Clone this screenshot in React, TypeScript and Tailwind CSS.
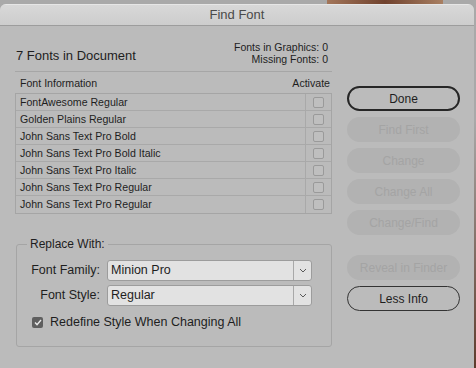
import React from 'react';

const fonts = [
  'FontAwesome Regular',
  'Golden Plains Regular',
  'John Sans Text Pro Bold',
  'John Sans Text Pro Bold Italic',
  'John Sans Text Pro Italic',
  'John Sans Text Pro Regular',
  'John Sans Text Pro Regular',
];

const buttons = ['Find First', 'Change', 'Change All', 'Change/Find'];

function Chevron() {
  return (
    <svg width="8" height="5" viewBox="0 0 8 5" fill="none">
      <path d="M1 1l3 3 3-3" stroke="#5a5a5a" strokeWidth="1" />
    </svg>
  );
}

function Select({ value }: { value: string }) {
  return (
    <div className="flex h-[21px] w-[205px] items-center rounded-[3px] border border-[#9c9c9c] bg-[#e2e2e2]">
      <span className="flex-1 pl-[3px] text-[12.5px] text-[#1e1e1e]">{value}</span>
      <div className="flex h-full w-[18px] items-center justify-center border-l border-[#a8a8a8]">
        <Chevron />
      </div>
    </div>
  );
}

export default function App() {
  return (
    <div
      className="relative h-[368px] w-[476px] overflow-hidden bg-[#a9a9a9]"
      style={{ fontFamily: '"Liberation Sans", Arial, sans-serif' }}
    >
      {/* picture peeking behind the dialog */}
      <div className="absolute left-[327px] top-0 h-[10px] w-[116px] bg-gradient-to-r from-[#a3765a] via-[#70422e] to-[#a98063]" />
      <div className="absolute right-0 top-[120px] h-[248px] w-[3px] bg-gradient-to-b from-[#a9a9a9] to-[#5e3b2c]" />

      <div className="relative mt-[4px] h-[364px] w-[474px] overflow-hidden rounded-t-[6px] bg-[#bbbbbb]">
        {/* title bar */}
        <div className="flex h-[22px] items-center justify-center border-b border-[#9d9d9d] border-t border-t-[#e6e6e6] bg-gradient-to-b from-[#d8d8d8] to-[#cdcdcd]">
          <span className="text-[13px] text-[#4a4a4a]">Find Font</span>
        </div>

        <div className="flex">
          {/* left column */}
          <div className="w-[332px] pl-[15px]">
            <div className="flex items-end justify-between border-b border-[#a6a6a6] pb-[6px] pr-[4px] pt-[15px]">
              <span className="mb-[1px] pl-[1px] text-[13px] leading-[16px] text-[#1e1e1e]">7 Fonts in Document</span>
              <div className="text-right text-[10.5px] leading-[12px] text-[#1e1e1e]">
                <div>Fonts in Graphics: 0</div>
                <div>Missing Fonts: 0</div>
              </div>
            </div>

            <div className="flex h-[21px] items-center justify-between pl-[5px] pr-[2px] pt-[2px] text-[10.6px] text-[#1e1e1e]">
              <span>Font Information</span>
              <span>Activate</span>
            </div>

            <div className="border border-[#a5a5a5]">
              {fonts.map((f, i) => (
                <div
                  key={i}
                  className={`flex h-[17px] items-stretch ${i < fonts.length - 1 ? 'border-b border-[#a9a9a9]' : ''}`}
                >
                  <div className="flex flex-1 items-center pl-[4px] pt-[1px] text-[10.6px] text-[#1e1e1e]">{f}</div>
                  <div className="flex w-[26px] items-center justify-center border-l border-[#a9a9a9]">
                    <div className="h-[11px] w-[11px] rounded-[2px] border border-[#9a9a9a] bg-[#bfbfbf]" />
                  </div>
                </div>
              ))}
            </div>

            <fieldset className="ml-[1px] mt-[23px] h-[110px] rounded-[3px] border border-[#a5a5a5] pb-[20px] pt-[9px]">
              <legend className="ml-[10px] px-[3px] text-[12px] leading-[14px] text-[#1e1e1e]">Replace With:</legend>
              <div className="flex items-center">
                <div className="w-[84px] pr-[1px] text-right text-[12.5px] text-[#1e1e1e]">Font Family:</div>
                <div className="ml-[6px]">
                  <Select value="Minion Pro" />
                </div>
              </div>
              <div className="mt-[4px] flex items-center">
                <div className="w-[84px] pr-[1px] text-right text-[12.5px] text-[#1e1e1e]">Font Style:</div>
                <div className="ml-[6px]">
                  <Select value="Regular" />
                </div>
              </div>
              <div className="ml-[15px] mt-[7px] flex items-center gap-[7px]">
                <div className="flex h-[11px] w-[11px] items-center justify-center rounded-[2px] bg-[#5f5f5f]">
                  <svg width="8" height="7" viewBox="0 0 8 7" fill="none">
                    <path d="M1 3.6l2 2L7 1" stroke="#e8e8e8" strokeWidth="1.4" />
                  </svg>
                </div>
                <span className="text-[12.5px] text-[#1e1e1e]">Redefine Style When Changing All</span>
              </div>
            </fieldset>
          </div>

          {/* right column */}
          <div className="flex flex-col pl-[15px] pt-[60px]">
            <button className="h-[25px] w-[113px] rounded-full border-2 border-[#262626] text-[12px] text-[#1e1e1e]">
              Done
            </button>
            <div className="mt-[6px] flex flex-col gap-[6px]">
              {buttons.map((b) => (
                <button
                  key={b}
                  className="h-[25px] w-[113px] rounded-full bg-[#b2b2b2] text-[12px] text-[#a4a4a4]"
                >
                  {b}
                </button>
              ))}
            </div>
            <button className="mt-[20px] h-[25px] w-[113px] rounded-full bg-[#b2b2b2] text-[12px] text-[#a4a4a4]">
              Reveal in Finder
            </button>
            <button className="mt-[6px] h-[25px] w-[113px] rounded-full border border-[#333333] text-[12px] text-[#1e1e1e]">
              Less Info
            </button>
          </div>
        </div>
      </div>
    </div>
  );
}
